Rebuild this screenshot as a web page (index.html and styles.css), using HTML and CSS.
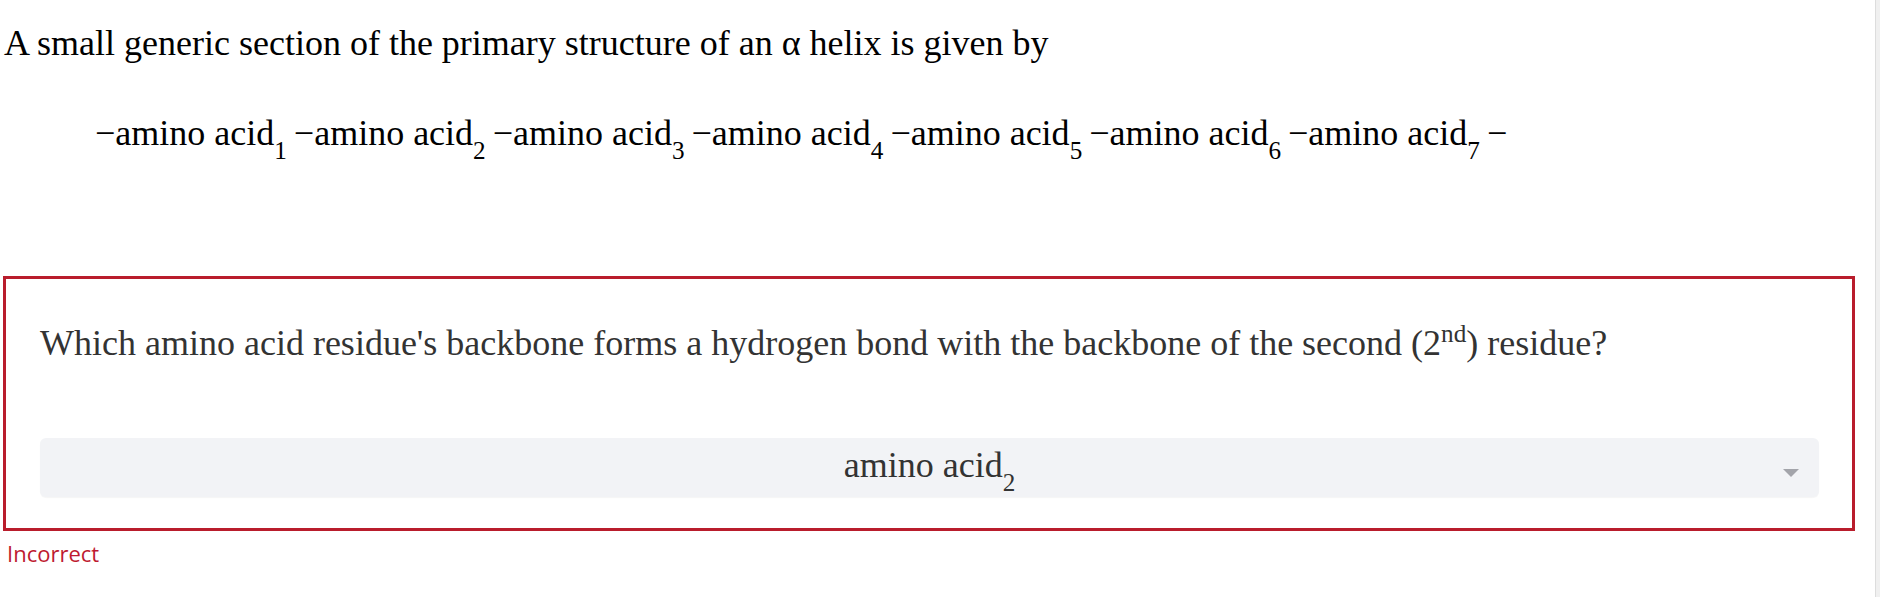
FILE: index.html
```html
<!DOCTYPE html>
<html lang="en">
<head>
<meta charset="utf-8">
<title>Alpha helix question</title>
<link rel="stylesheet" href="styles.css">
</head>
<body>
<div class="page">
  <main class="main">
    <p class="intro">A small generic section of the primary structure of an α helix is given by</p>
    <p class="equation"><span class="seg">−amino acid<sub>1</sub></span><span class="seg">−amino acid<sub>2</sub></span><span class="seg">−amino acid<sub>3</sub></span><span class="seg">−amino acid<sub>4</sub></span><span class="seg">−amino acid<sub>5</sub></span><span class="seg">−amino acid<sub>6</sub></span><span class="seg">−amino acid<sub>7</sub></span><span class="seg">−</span></p>
    <section class="question-box">
      <p class="question">Which amino acid residue's backbone forms a hydrogen bond with the backbone of the second (2<sup>nd</sup>) residue?</p>
      <div class="select">
        <span class="select-value">amino acid<sub>2</sub></span>
        <span class="caret"></span>
      </div>
    </section>
    <p class="feedback">Incorrect</p>
  </main>
  <div class="scroll-edge"></div>
</div>
</body>
</html>
```
FILE: styles.css
```css
html, body {
  margin: 0;
  padding: 0;
  background: #ffffff;
}

.page {
  display: flex;
  width: 1880px;
  min-height: 597px;
}

.main {
  flex: 1;
  padding: 0 20px 0 3px;
  font-family: "Liberation Serif", "Times New Roman", serif;
  font-size: 36px;
  line-height: 40px;
}

.scroll-edge {
  width: 4px;
  background: #f0f0f0;
  border-left: 1px solid #dddddd;
}

p {
  margin: 0;
}

.intro {
  padding-top: 23px;
  padding-left: 1px;
  color: #000000;
}

.equation {
  margin-top: 50px;
  padding-left: 92px;
  color: #000000;
  white-space: nowrap;
}

.seg + .seg {
  margin-left: 7px;
}

sub {
  font-size: 0.7em;
  line-height: 0;
  vertical-align: -0.54em;
}

sup {
  font-size: 0.7em;
  line-height: 0;
  vertical-align: 0.5em;
}

.question-box {
  margin-top: 123px;
  border: 3px solid #b91d2c;
  padding: 44px 33px 31px 34px;
}

.question {
  color: #333333;
}

.select {
  margin-top: 75px;
  height: 59px;
  box-sizing: border-box;
  padding: 7px 20px 12px;
  background: #f2f3f6;
  border-radius: 6px;
  box-shadow: 0 1px 1px rgba(0, 0, 0, 0.04);
  display: flex;
  align-items: flex-start;
  position: relative;
  justify-content: center;
  color: #333333;
}

.caret {
  position: absolute;
  right: 20px;
  top: 31px;
  width: 0;
  height: 0;
  border-left: 8px solid transparent;
  border-right: 8px solid transparent;
  border-top: 8px solid #a3a4aa;
}

.feedback {
  margin-top: 7px;
  padding-left: 4px;
  font-family: "Open Sans", "Noto Sans", sans-serif;
  font-size: 22px;
  line-height: 30px;
  color: #be1a30;
}
```
